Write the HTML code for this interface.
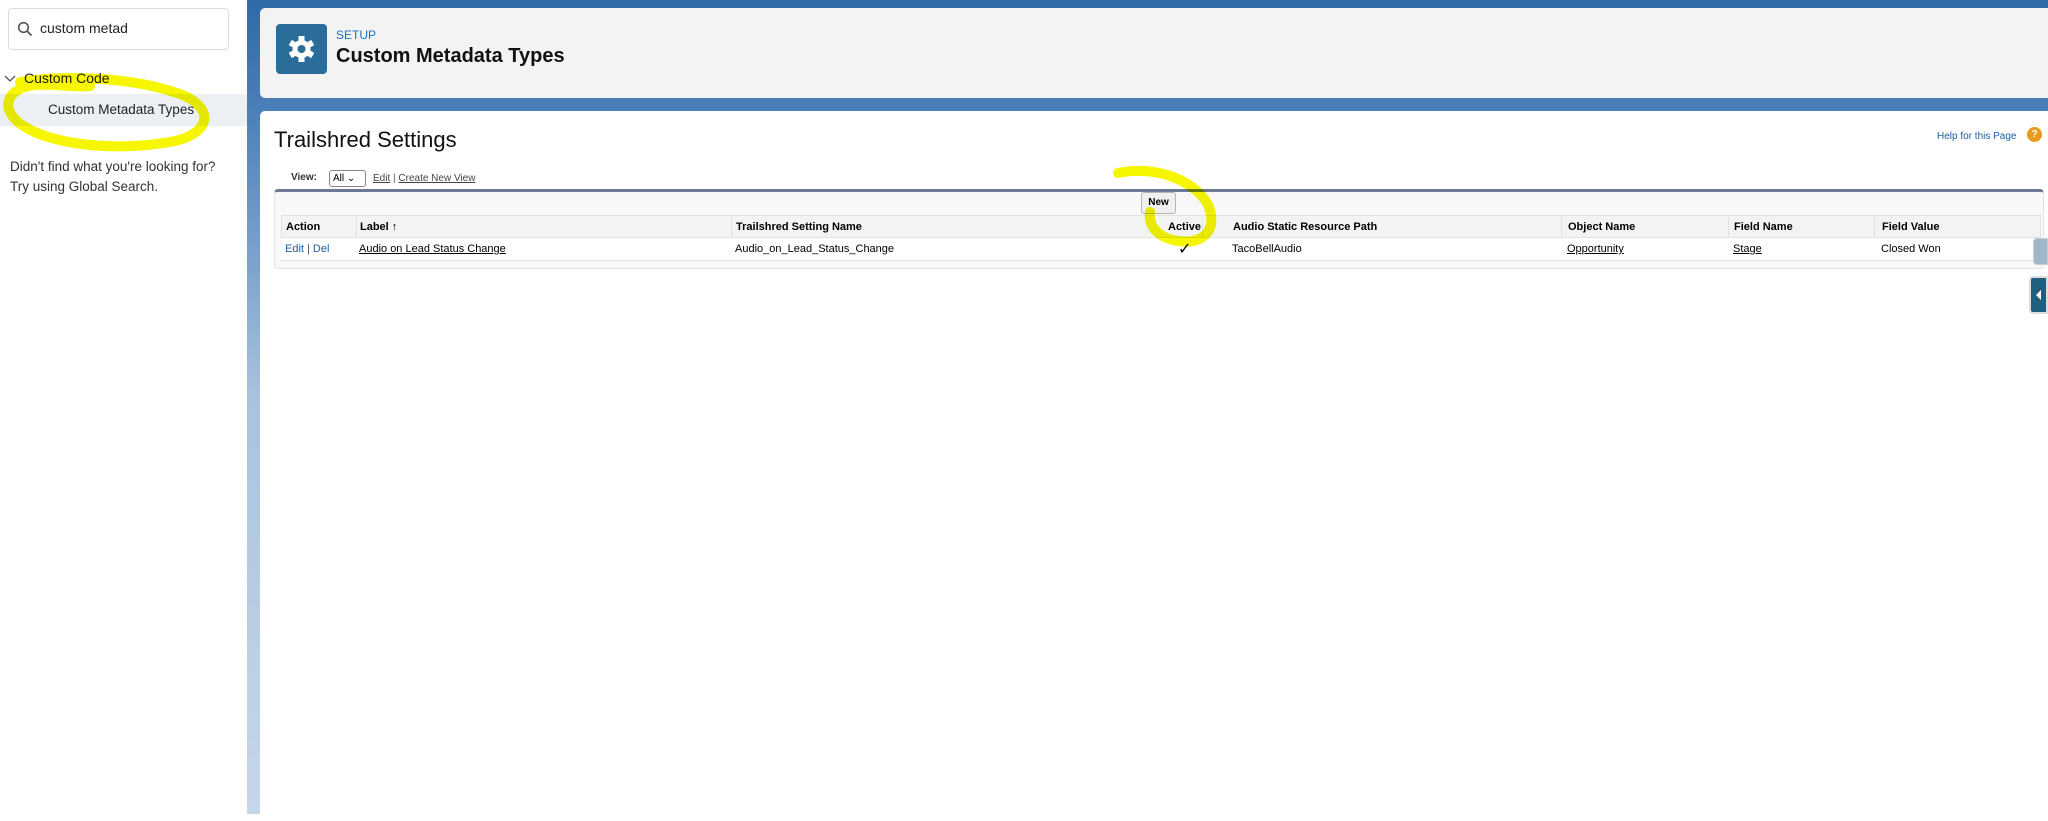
<!DOCTYPE html>
<html><head><meta charset="utf-8"><style>
*{margin:0;padding:0;box-sizing:border-box}
body{width:2048px;height:814px;overflow:hidden;font-family:"Liberation Sans",Arial,sans-serif;background:#fff;position:relative}
.side{position:absolute;left:0;top:0;width:247px;height:814px;background:#fff}
.bluebg{position:absolute;left:247px;top:0;right:0;height:814px;background:linear-gradient(180deg,#2f69a8 0,#4b7fb8 110px,#a9c3de 400px,#c6d6ea 814px)}
.hdr{position:absolute;left:260px;top:8px;width:1800px;height:90px;background:#f3f3f3;border-radius:5px}
.icon{position:absolute;left:276px;top:24px;width:51px;height:50px;background:#2a6d9a;border-radius:4px}
.card{position:absolute;left:260px;top:111px;width:1800px;height:710px;background:#fff;border-radius:5px}
.t{position:absolute;white-space:nowrap}
.u{text-decoration:underline;color:#000}
.tbl{position:absolute;left:274px;top:189px;width:1770px;height:80px;border:1px solid #e0e3e5;border-top:3px solid #6b7a92;border-radius:4px;background:#f8f8f8}
.row{position:absolute;left:281px;width:1760px;font-size:11px}
.th{top:215px;height:23px;background:#f2f3f3;border:1px solid #e0e3e5;font-weight:bold}
.td{top:238px;height:23px;background:#fff;border-bottom:1px solid #e3e3e3}
.row span{position:absolute;top:5px;white-space:nowrap}
.row i{position:absolute;top:0;bottom:0;width:1px;background:#e0e3e5}
</style></head><body>
<div class="side">
 <div style="position:absolute;left:8px;top:8px;width:221px;height:42px;border:1px solid #d8dde6;border-radius:4px"></div>
 <svg style="position:absolute;left:17px;top:21px" width="16" height="16" viewBox="0 0 16 16"><circle cx="6.5" cy="6.5" r="4.8" fill="none" stroke="#555" stroke-width="1.6"/><path d="M10 10l4.5 4.5" stroke="#555" stroke-width="1.8"/></svg>
 <div class="t" style="left:40px;top:20px;font-size:14px;color:#222">custom metad</div>
 <svg style="position:absolute;left:4px;top:74px" width="12" height="10"><path d="M1 2l5 5 5-5" fill="none" stroke="#555" stroke-width="1.3"/></svg>
 <div class="t" style="left:24px;top:70px;font-size:14px;color:#222">Custom Code</div>
 <div style="position:absolute;left:0;top:94px;width:247px;height:32px;background:#ecf0f4"></div>
 <div class="t" style="left:48px;top:102px;font-size:13.5px;color:#222">Custom Metadata Types</div>
 <div class="t" style="left:10px;top:157px;font-size:13.5px;color:#333;line-height:20px">Didn't find what you're looking for?<br>Try using Global Search.</div>
</div>
<div class="bluebg"></div>
<div class="hdr"></div>
<div class="icon"><svg width="51" height="50" viewBox="0 0 51 50"><g transform="translate(25.5 25)" fill="#fff"><circle r="9"/><g id="k"><rect x="-3" y="-13" width="6" height="6"/></g><use href="#k" transform="rotate(60)"/><use href="#k" transform="rotate(120)"/><use href="#k" transform="rotate(180)"/><use href="#k" transform="rotate(240)"/><use href="#k" transform="rotate(300)"/><circle r="4" fill="#2a6d9a"/></g></svg></div>
<div class="t" style="left:336px;top:28px;font-size:12px;color:#1b70c2">SETUP</div>
<div class="t" style="left:336px;top:45px;font-size:20px;font-weight:bold;color:#111">Custom Metadata Types</div>
<div class="card"></div>
<div class="t" style="left:274px;top:127px;font-size:22px;color:#111">Trailshred Settings</div>
<div class="t" style="left:1937px;top:131px;font-size:10px;color:#1b5fa3">Help for this Page</div>
<div style="position:absolute;left:2027px;top:127px;width:15px;height:15px;border-radius:50%;background:#e89a1c;color:#fff;font-size:10px;font-weight:bold;text-align:center;line-height:15px">?</div>
<div class="t" style="left:291px;top:172px;font-size:10px;font-weight:bold;color:#333">View:</div>
<div style="position:absolute;left:329px;top:170px;width:37px;height:17px;border:1px solid #888;border-radius:3px;font-size:10px;padding:2px 3px">All ⌄</div>
<div class="t" style="left:373px;top:173px;font-size:10px;color:#555"><span class="u" style="color:#444">Edit</span> | <span class="u" style="color:#444">Create New View</span></div>
<div class="tbl"></div>
<div style="position:absolute;left:1141px;top:192px;width:35px;height:22px;border:1px solid #b5b5b5;border-radius:3px;background:#f0f0f0;font-size:10px;font-weight:bold;text-align:center;line-height:20px">New</div>
<div class="row th">
 <span style="left:4px">Action</span><i style="left:74px"></i><span style="left:78px">Label ↑</span><i style="left:449px"></i><span style="left:454px">Trailshred Setting Name</span>
 <span style="left:886px">Active</span><i style="left:920px"></i><span style="left:951px">Audio Static Resource Path</span><i style="left:1279px"></i><span style="left:1286px">Object Name</span><i style="left:1446px"></i><span style="left:1452px">Field Name</span><i style="left:1592px"></i><span style="left:1600px">Field Value</span>
</div>
<div class="row td">
 <span style="left:4px;color:#1b5fa3">Edit <b style="color:#555;font-weight:normal">|</b> Del</span><span class="u" style="left:78px">Audio on Lead Status Change</span><span style="left:454px">Audio_on_Lead_Status_Change</span>
 <span style="left:897px;top:1px;font-size:16px">✓</span><span style="left:951px">TacoBellAudio</span><span class="u" style="left:1286px">Opportunity</span><span class="u" style="left:1452px">Stage</span><span style="left:1600px">Closed Won</span>
</div>
<div style="position:absolute;left:2033px;top:238px;width:15px;height:27px;border:1px solid #ccc;border-radius:4px 0 0 4px;background:#9fb7c8"></div>
<div style="position:absolute;left:2029px;top:276px;width:19px;height:38px;border:2px solid #ddd;border-radius:4px 0 0 4px;background:#1f5f80"><svg width="15" height="34"><path d="M5 17l5-5v10z" fill="#fff"/></svg></div>
<svg style="position:absolute;left:0;top:0;mix-blend-mode:multiply" width="2048" height="814">
 <path d="M20 82 C70 74 140 78 185 96 C215 110 210 135 170 142 C110 152 45 144 18 122 C2 108 6 92 28 86 C50 82 70 88 90 86" fill="none" stroke="#f6f600" stroke-width="10" stroke-linecap="round"/>
 <path d="M1118 173 C1155 165 1195 180 1208 205 C1218 228 1205 245 1178 241 C1158 238 1148 226 1150 212" fill="none" stroke="#f6f600" stroke-width="10" stroke-linecap="round"/>
</svg>
</body></html>
